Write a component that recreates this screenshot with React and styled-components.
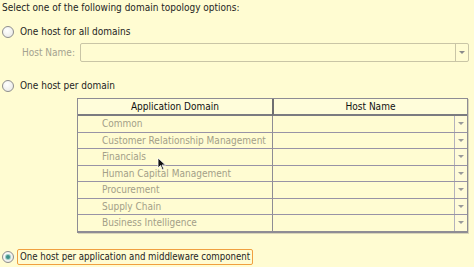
import React from 'react'
import styled, { createGlobalStyle } from 'styled-components'

const Global = createGlobalStyle`
  html, body { margin: 0; padding: 0; background: #fffcd2; }
  body { font-family: "DejaVu Sans Condensed", "DejaVu Sans", Tahoma, sans-serif; font-size: 10px; color: #1e1e1e; }
`

const Page = styled.div`
  width: 474px;
  height: 267px;
  overflow: hidden;
  background: #fffcd2;
  padding: 0 0 0 2px;
  box-sizing: border-box;
`

const Title = styled.div`
  height: 16px;
  line-height: 16px;
  margin-bottom: 8px;
`

const RadioRow = styled.label`
  display: flex;
  align-items: center;
  height: 16px;
  gap: 3px;
  margin-top: ${p => p.$mt || 0}px;
`

const Radio = styled.span`
  width: 10px;
  height: 10px;
  border-radius: 50%;
  border: 1px solid #8d8d8d;
  background: radial-gradient(circle at 40% 35%, #ffffff, #e6e6e2);
  display: flex;
  align-items: center;
  justify-content: center;
  flex: none;
  &::after {
    content: '';
    display: ${p => (p.$on ? 'block' : 'none')};
    width: 4px;
    height: 4px;
    border-radius: 50%;
    background: #3d8f8a;
    box-shadow: 0 0 0 1px #9fd0c8;
  }
`

const Label = styled.span`
  padding: 1px 2px;
  border: 1px solid ${p => (p.$focus ? '#f0a040' : 'transparent')};
  border-radius: 2px;
  line-height: 12px;
  font-size: ${p => (p.$focus ? 9.6 : 10)}px;
`

const HostRow = styled.div`
  display: flex;
  align-items: center;
  margin: 3px 0 0 20px;
  height: 18px;
`

const HostLabel = styled.span`
  color: #a4a290;
  width: 58px;
  white-space: nowrap;
`

const Combo = styled.div`
  display: flex;
  width: 387px;
  height: 17px;
  border: 1px solid #c9c5a6;
  border-radius: 2px;
  background: #fffcd2;
`

const ComboField = styled.div`
  flex: 1;
`

const ComboButton = styled.div`
  width: 12px;
  border-left: 1px solid #c9c5a6;
  display: flex;
  align-items: center;
  justify-content: center;
  &::after {
    content: '';
    border-left: 3px solid transparent;
    border-right: 3px solid transparent;
    border-top: 3px solid #8a8a8a;
  }
`

const Table = styled.div`
  margin: 4px 0 0 75px;
  width: 389px;
  border: 1px solid #8e8c94;
  border-bottom: 2px solid #8e8c94;
  box-shadow: 1px 1px 0 #d8d4b8;
  display: grid;
  grid-template-columns: 194px 1fr;
`

const HeadCell = styled.div`
  height: 15px;
  line-height: 15px;
  text-align: center;
  color: #111;
  background: #fffdda;
  border-bottom: 2px solid #7b7b80;
  border-left: ${p => (p.$first ? 'none' : '2px solid #6f6f70')};
`

const Cell = styled.div`
  height: 15.5px;
  line-height: 15px;
  border-bottom: ${p => (p.$last ? 'none' : '1px solid #9893a6')};
  border-left: ${p => (p.$first ? 'none' : '1px solid #8e8c94')};
  padding-left: ${p => (p.$first ? 24 : 0)}px;
  color: #a39f88;
  display: flex;
  white-space: nowrap;
  overflow: hidden;
`

const CellField = styled.div`
  flex: 1;
`

const CellButton = styled.div`
  width: 12px;
  border-left: 1px solid #b4b1bc;
  background: #fffbd8;
  display: flex;
  align-items: center;
  justify-content: center;
  &::after {
    content: '';
    border-left: 3px solid transparent;
    border-right: 3px solid transparent;
    border-top: 3px solid #9a9a9a;
  }
`

const Cursor = styled.svg`
  position: absolute;
  left: 157px;
  top: 157px;
`

const domains = [
  'Common',
  'Customer Relationship Management',
  'Financials',
  'Human Capital Management',
  'Procurement',
  'Supply Chain',
  'Business Intelligence',
]

export default function App() {
  return (
    <>
      <Global />
      <Page>
        <Title>Select one of the following domain topology options:</Title>
        <RadioRow>
          <Radio />
          <Label>One host for all domains</Label>
        </RadioRow>
        <HostRow>
          <HostLabel>Host Name:</HostLabel>
          <Combo>
            <ComboField />
            <ComboButton />
          </Combo>
        </HostRow>
        <RadioRow $mt={17}>
          <Radio />
          <Label>One host per domain</Label>
        </RadioRow>
        <Table>
          <HeadCell $first>Application Domain</HeadCell>
          <HeadCell>Host Name</HeadCell>
          {domains.map((d, i) => (
            <React.Fragment key={d}>
              <Cell $first $last={i === domains.length - 1}>{d}</Cell>
              <Cell $last={i === domains.length - 1}>
                <CellField />
                <CellButton />
              </Cell>
            </React.Fragment>
          ))}
        </Table>
        <RadioRow $mt={16}>
          <Radio $on />
          <Label $focus>One host per application and middleware component</Label>
        </RadioRow>
        <Cursor width="10" height="14" viewBox="0 0 10 14">
          <path d="M1 1 L1 11 L3.5 8.5 L5.5 13 L7 12.3 L5 8 L8.5 8 Z" fill="#111" stroke="#fff" strokeWidth="0.8" />
        </Cursor>
      </Page>
    </>
  )
}
